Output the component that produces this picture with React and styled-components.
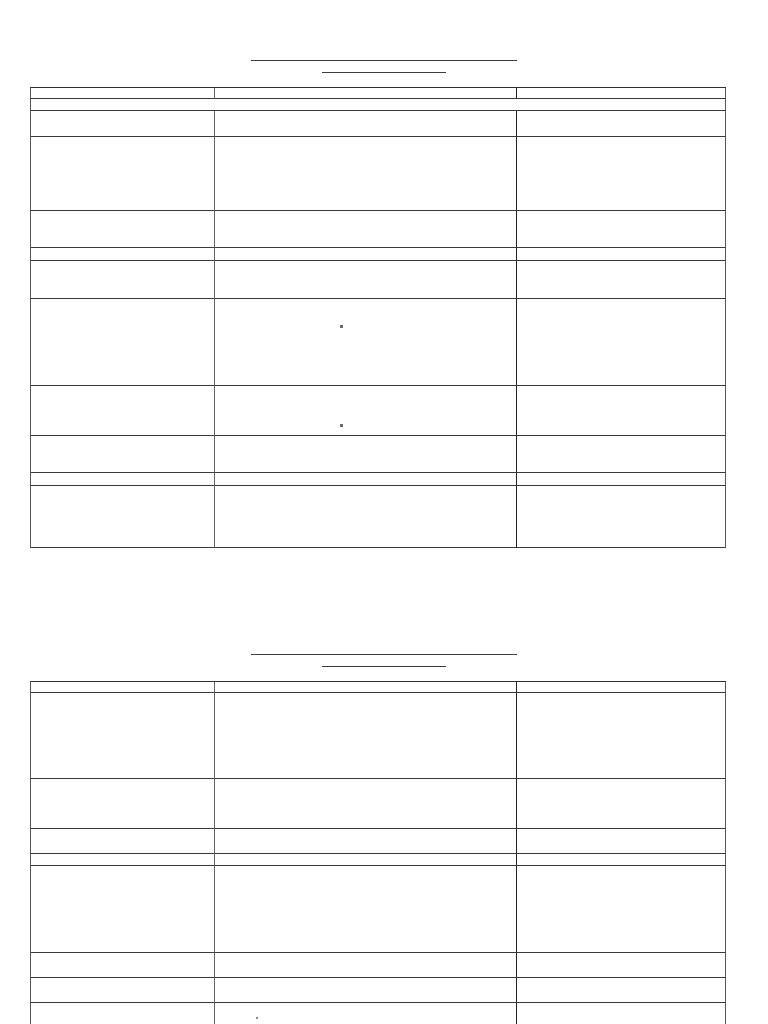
import React from "react";
import styled, { createGlobalStyle } from "styled-components";

const GlobalStyle = createGlobalStyle`
  html, body {
    margin: 0;
    padding: 0;
    background: #ffffff;
    font-family: "Liberation Sans", Arial, sans-serif;
  }
`;

const Page = styled.main`
  width: 768px;
  padding-bottom: 40px;
`;

const Section = styled.section`
  width: 768px;
  margin-top: ${props => props.$gap}px;
`;

const Rule = styled.div`
  width: ${props => props.$width}px;
  height: ${props => props.$height}px;
  margin: 0 auto;
  box-sizing: border-box;
  border-bottom: 1px solid #3c3c3c;
`;

const Grid = styled.div`
  display: grid;
  grid-template-columns: 184px 302px 209px;
  width: 695px;
  margin: 14px 0 0 30px;
  border-top: 1px solid #2e2e2e;
  border-left: 1px solid #555555;
`;

const Cell = styled.div`
  height: ${props => props.$height}px;
  grid-column: ${props => (props.$span ? "1 / -1" : "auto")};
  box-sizing: border-box;
  border-right: 1px solid ${props => props.$edge};
  border-bottom: 1px solid #3a3a3a;
  padding: ${props => props.$dot ? `${props.$dot[1]}px 0 0 ${props.$dot[0]}px` : 0};
`;

const Dot = styled.span`
  display: block;
  width: ${props => props.$size}px;
  height: ${props => props.$size}px;
  background: ${props => props.$tone};
`;

const edges = ["#666666", "#222222", "#555555"];

const firstTable = [
  { h: 11 },
  { h: 12, span: true },
  { h: 26 },
  { h: 74 },
  { h: 37 },
  { h: 13 },
  { h: 38 },
  { h: 87, dot: [125, 26, 3, "#6a6a6a"] },
  { h: 50, dot: [125, 38, 3, "#6a6a6a"] },
  { h: 37 },
  { h: 13 },
  { h: 62 }
];

const secondTable = [
  { h: 11 },
  { h: 86 },
  { h: 50 },
  { h: 25 },
  { h: 12 },
  { h: 87 },
  { h: 25 },
  { h: 25 },
  { h: 70, dot: [41, 14, 2, "#8a8a8a"] }
];

const Table = ({ rows }) => (
  <Grid>
    {rows.map((row, i) =>
      row.span ? (
        <Cell key={i} $height={row.h} $span $edge="#555555" />
      ) : (
        [0, 1, 2].map(c => (
          <Cell key={`${i}-${c}`} $height={row.h} $edge={edges[c]} $dot={c === 1 ? row.dot : null}>
            {c === 1 && row.dot ? <Dot $size={row.dot[2]} $tone={row.dot[3]} /> : null}
          </Cell>
        ))
      )
    )}
  </Grid>
);

const Block = ({ rows, gap }) => (
  <Section $gap={gap}>
    <Rule $width={266} $height={61} />
    <Rule $width={124} $height={12} />
    <Table rows={rows} />
  </Section>
);

const App = () => {
  return (
    <Page>
      <GlobalStyle />
      <Block rows={firstTable} gap={0} />
      <Block rows={secondTable} gap={46} />
    </Page>
  );
};

export default App;
